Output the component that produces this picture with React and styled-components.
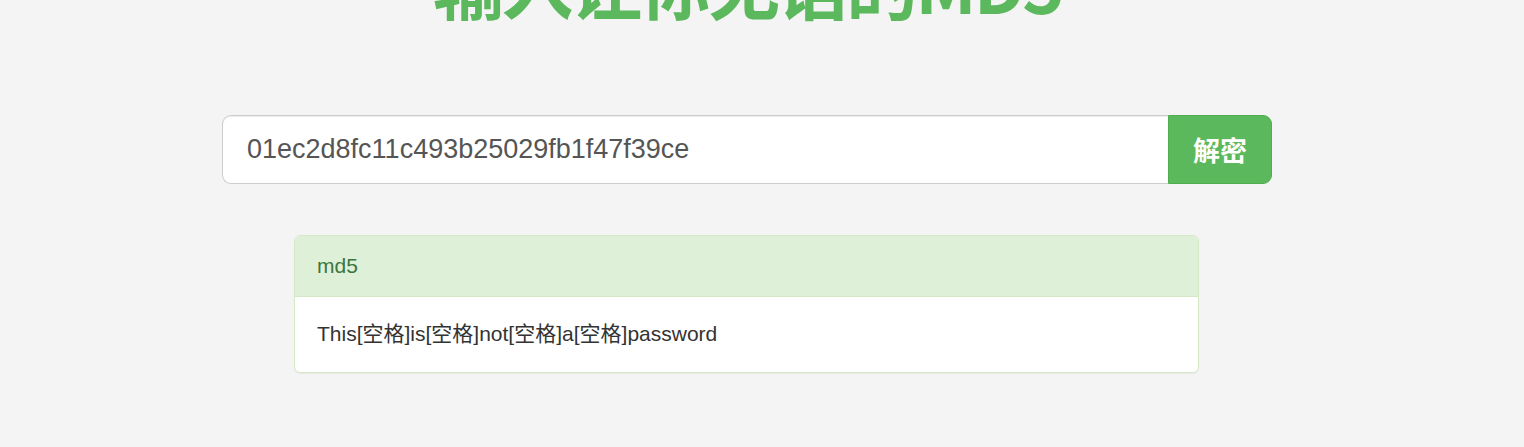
import React, { useState } from 'react'
import styled, { createGlobalStyle } from 'styled-components'

const GlobalStyle = createGlobalStyle`
  html, body {
    margin: 0;
    padding: 0;
    background: #f4f4f4;
  }
  body {
    font-family: "Liberation Sans", Arial, "Noto Sans CJK SC", sans-serif;
    color: #333;
  }
`

const Page = styled.div`
  display: flex;
  flex-direction: column;
  align-items: center;
  padding-right: 30px;
  height: 447px;
  overflow: hidden;
`

const Title = styled.h1`
  margin: -57px 0 0;
  font-family: "Noto Sans CJK SC", "Liberation Sans", sans-serif;
  font-size: 72px;
  line-height: 1.1;
  font-weight: 700;
  letter-spacing: -3px;
  color: #5cb85c;
  text-align: center;
`

const Form = styled.form`
  display: flex;
  width: 1050px;
  margin-top: 93px;
`

const Input = styled.input`
  flex: 1;
  height: 69px;
  box-sizing: border-box;
  padding: 15px 24px;
  font-family: "Liberation Sans", Arial, sans-serif;
  font-size: 27px;
  color: #555;
  background: #fff;
  border: 1px solid #ccc;
  border-right: none;
  border-radius: 9px 0 0 9px;
  box-shadow: inset 0 1px 1px rgba(0, 0, 0, 0.075);
  outline: none;
`

const Button = styled.button`
  width: 104px;
  height: 69px;
  box-sizing: border-box;
  padding: 0 24px;
  font-family: "Liberation Sans", "Noto Sans CJK SC", sans-serif;
  font-size: 27px;
  font-weight: 700;
  color: #fff;
  background: #5cb85c;
  border: 1px solid #4cae4c;
  border-radius: 0 9px 9px 0;
  cursor: pointer;
`

const Panel = styled.div`
  width: 905px;
  margin-top: 51px;
  margin-right: 1px;
  box-sizing: border-box;
  background: #fff;
  border: 1px solid #d6e9c6;
  border-radius: 6px;
  box-shadow: 0 1px 1px rgba(0, 0, 0, 0.05);
  overflow: hidden;
`

const PanelHeading = styled.div`
  padding: 15px 22px;
  font-size: 21px;
  line-height: 30px;
  color: #3c763d;
  background: #dff0d8;
  border-bottom: 1px solid #d6e9c6;
`

const PanelBody = styled.div`
  padding: 22px 22px 23px;
  font-family: "Liberation Sans", Arial, "Noto Sans CJK SC", sans-serif;
  font-size: 21px;
  line-height: 30px;
  color: #333;
`

const App = () => {
  const [hash, setHash] = useState('01ec2d8fc11c493b25029fb1f47f39ce')

  return (
    <>
      <GlobalStyle />
      <Page>
        <Title>输入让你无语的MD5</Title>
        <Form onSubmit={e => e.preventDefault()}>
          <Input value={hash} onChange={e => setHash(e.target.value)} />
          <Button type="submit">解密</Button>
        </Form>
        <Panel>
          <PanelHeading>md5</PanelHeading>
          <PanelBody>This[空格]is[空格]not[空格]a[空格]password</PanelBody>
        </Panel>
      </Page>
    </>
  )
}

export default App
